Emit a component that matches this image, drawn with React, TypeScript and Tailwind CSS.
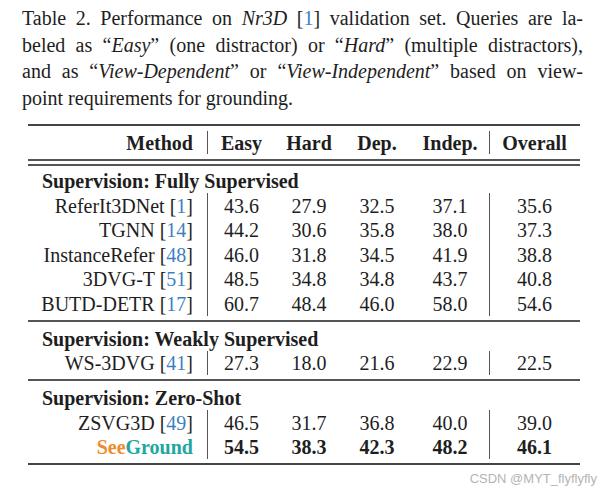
const serif = "font-['Liberation_Serif','Times_New_Roman',serif]";

type Row = { name: string; cite?: string; vals: string[]; best?: boolean };

const sections: { title: string; rows: Row[] }[] = [
  {
    title: "Supervision: Fully Supervised",
    rows: [
      { name: "ReferIt3DNet", cite: "1", vals: ["43.6", "27.9", "32.5", "37.1", "35.6"] },
      { name: "TGNN", cite: "14", vals: ["44.2", "30.6", "35.8", "38.0", "37.3"] },
      { name: "InstanceRefer", cite: "48", vals: ["46.0", "31.8", "34.5", "41.9", "38.8"] },
      { name: "3DVG-T", cite: "51", vals: ["48.5", "34.8", "34.8", "43.7", "40.8"] },
      { name: "BUTD-DETR", cite: "17", vals: ["60.7", "48.4", "46.0", "58.0", "54.6"] },
    ],
  },
  {
    title: "Supervision: Weakly Supervised",
    rows: [{ name: "WS-3DVG", cite: "41", vals: ["27.3", "18.0", "21.6", "22.9", "22.5"] }],
  },
  {
    title: "Supervision: Zero-Shot",
    rows: [
      { name: "ZSVG3D", cite: "49", vals: ["46.5", "31.7", "36.8", "40.0", "39.0"] },
      { name: "SeeGround", vals: ["54.5", "38.3", "42.3", "48.2", "46.1"], best: true },
    ],
  },
];

function Cite({ n }: { n: string }) {
  return (
    <>
      {" "}[<span className="text-[#3d7fc1]">{n}</span>]
    </>
  );
}

function DataRow({ row }: { row: Row }) {
  const b = row.best ? "font-bold" : "";
  return (
    <div className="flex h-[24.5px] items-center">
      <div className="w-[179px] pr-[14px] text-right whitespace-nowrap">
        {row.best ? (
          <span className="font-bold">
            <span className="text-[#ee8b2f]">See</span>
            <span className="text-[#21a7a0]">Ground</span>
          </span>
        ) : (
          <>
            {row.name}
            <Cite n={row.cite!} />
          </>
        )}
      </div>
      <div className="flex h-full items-center border-l border-[#555]">
        <div className={`w-[67px] text-center ${b}`}>{row.vals[0]}</div>
        <div className={`w-[68px] text-center ${b}`}>{row.vals[1]}</div>
        <div className={`w-[68px] text-center ${b}`}>{row.vals[2]}</div>
        <div className={`w-[78px] text-center ${b}`}>{row.vals[3]}</div>
      </div>
      <div className={`flex h-full w-[90px] items-center justify-center border-l border-[#555] ${b}`}>
        {row.vals[4]}
      </div>
    </div>
  );
}

export default function App() {
  return (
    <div className={`w-[606px] h-[491px] bg-white text-[#1e1e1e] ${serif} overflow-hidden`}>
      <div className="pl-[22px] pr-[23px] pt-[5px] text-[20px] leading-[26.6px]">
        <div className="text-justify [text-align-last:justify]">
          Table 2. Performance on <i>Nr3D</i> [<span className="text-[#3d7fc1]">1</span>] validation set. Queries are la-
        </div>
        <div className="text-justify [text-align-last:justify]">
          beled as “<i>Easy</i>” (one distractor) or “<i>Hard</i>” (multiple distractors),
        </div>
        <div className="text-justify [text-align-last:justify]">
          and as “<i>View-Dependent</i>” or “<i>View-Independent</i>” based on view-
        </div>
        <div>point requirements for grounding.</div>
      </div>

      <div className="ml-[28px] mt-[13px] w-[552px] text-[20px] leading-none">
        <div className="h-[2px] bg-[#444]" />
        <div className="flex h-[33px] items-center font-bold">
          <div className="w-[179px] pr-[14px] text-right">Method</div>
          <div className="h-[23px] border-l border-[#555]" />
          <div className="w-[67px] text-center">Easy</div>
          <div className="w-[68px] text-center">Hard</div>
          <div className="w-[68px] text-center">Dep.</div>
          <div className="w-[78px] text-center">Indep.</div>
          <div className="h-[23px] border-l border-[#555]" />
          <div className="w-[89px] text-center">Overall</div>
        </div>
        <div className="h-[2px] bg-[#555]" />
        <div className="mt-[3px] h-[2px] bg-[#555]" />

        {sections.map((s, i) => (
          <div key={s.title}>
            {i > 0 && <div className="h-[2px] bg-[#555]" />}
            <div className={i === 0 ? "pt-[3px]" : "pt-[5px]"}>
              <div className="flex h-[24px] items-center pl-[14px] font-bold">{s.title}</div>
              {s.rows.map((r) => (
                <DataRow key={r.name} row={r} />
              ))}
            </div>
            <div className="h-[4px]" />
          </div>
        ))}
        <div className="h-[2px] bg-[#444]" />
      </div>

      <div className="mt-[6px] pr-[9px] text-right font-['Liberation_Sans',Arial,sans-serif] text-[13px] leading-[16px] text-[#b4b4b4]">
        CSDN @MYT_flyflyfly
      </div>
    </div>
  );
}
